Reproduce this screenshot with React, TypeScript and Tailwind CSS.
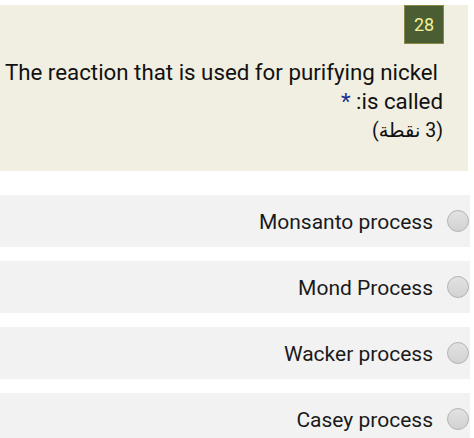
export default function App() {
  const options = ['Monsanto process', 'Mond Process', 'Wacker process', 'Casey process']

  return (
    <div
      className="w-[474px] h-[438px] overflow-hidden bg-white pt-[5px]"
      style={{ fontFamily: 'Roboto, "DejaVu Sans", sans-serif' }}
    >
      {/* Question header */}
      <div className="w-[468px] h-[166px] bg-[#f1eee2] pr-[24px] flex flex-col items-end">
        <div className="w-[40px] h-[39px] bg-[#4b5e33] border border-[#8a8a45] flex items-center justify-center text-[18px] text-[#f4f19b]">
          28
        </div>
        <div dir="rtl" className="mt-[14px] text-[22.3px] leading-[29px] text-[#111] text-right pr-[1px] whitespace-nowrap">
          <div className="pr-[5px]">The reaction that is used for purifying nickel</div>
          <div>
            is called: <span className="text-[#1f2d8f]">*</span>
          </div>
          <div className="text-[19.5px]">(3 نقطة)</div>
        </div>
      </div>

      {/* Options */}
      <div className="mt-[24px] flex flex-col gap-[14px]">
        {options.map((o) => (
          <div key={o} className="w-[470px] h-[52px] bg-[#f2f2f2] flex items-center justify-end gap-[14px] pr-[1px]">
            <span className="text-[21px] text-[#1a1a1a] pt-[3px]">{o}</span>
            <span className="w-[22px] h-[22px] rounded-full border border-[#b4b4b4] bg-gradient-to-b from-[#e2e2e2] to-[#d2d2d2]" />
          </div>
        ))}
      </div>
    </div>
  )
}
